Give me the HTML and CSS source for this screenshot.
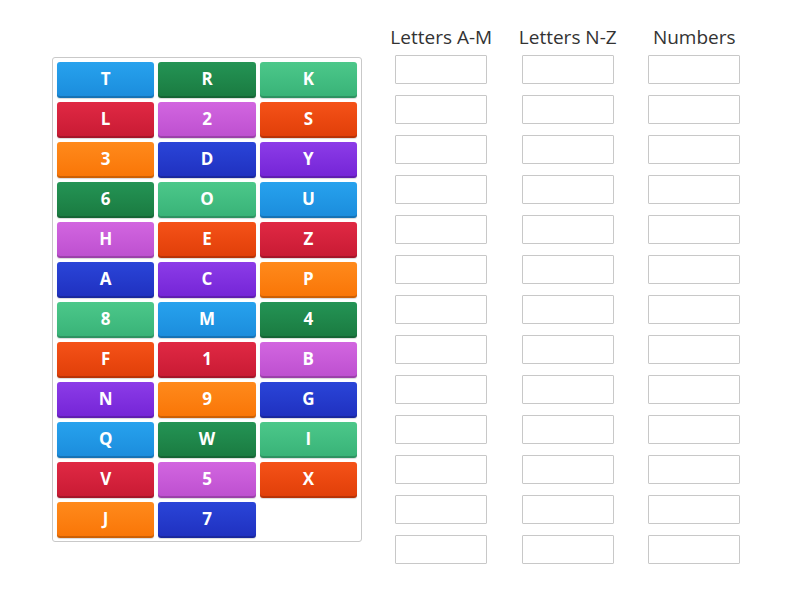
FILE: index.html
```html
<!DOCTYPE html>
<html>
<head>
<meta charset="utf-8">
<link rel="stylesheet" href="styles.css">
</head>
<body>
<div class="page">
  <div class="bank">
    <div class="tile blue">T</div><div class="tile dgreen">R</div><div class="tile lgreen">K</div>
    <div class="tile red">L</div><div class="tile pink">2</div><div class="tile rorange">S</div>
    <div class="tile orange">3</div><div class="tile dblue">D</div><div class="tile purple">Y</div>
    <div class="tile dgreen">6</div><div class="tile lgreen">O</div><div class="tile blue">U</div>
    <div class="tile pink">H</div><div class="tile rorange">E</div><div class="tile red">Z</div>
    <div class="tile dblue">A</div><div class="tile purple">C</div><div class="tile orange">P</div>
    <div class="tile lgreen">8</div><div class="tile blue">M</div><div class="tile dgreen">4</div>
    <div class="tile rorange">F</div><div class="tile red">1</div><div class="tile pink">B</div>
    <div class="tile purple">N</div><div class="tile orange">9</div><div class="tile dblue">G</div>
    <div class="tile blue">Q</div><div class="tile dgreen">W</div><div class="tile lgreen">I</div>
    <div class="tile red">V</div><div class="tile pink">5</div><div class="tile rorange">X</div>
    <div class="tile orange">J</div><div class="tile dblue">7</div>
  </div>
  <div class="groups">
    <div class="group">
      <div class="title">Letters A-M</div>
      <div class="slot"></div><div class="slot"></div><div class="slot"></div><div class="slot"></div><div class="slot"></div><div class="slot"></div><div class="slot"></div><div class="slot"></div><div class="slot"></div><div class="slot"></div><div class="slot"></div><div class="slot"></div><div class="slot"></div>
    </div>
    <div class="group">
      <div class="title">Letters N-Z</div>
      <div class="slot"></div><div class="slot"></div><div class="slot"></div><div class="slot"></div><div class="slot"></div><div class="slot"></div><div class="slot"></div><div class="slot"></div><div class="slot"></div><div class="slot"></div><div class="slot"></div><div class="slot"></div><div class="slot"></div>
    </div>
    <div class="group">
      <div class="title">Numbers</div>
      <div class="slot"></div><div class="slot"></div><div class="slot"></div><div class="slot"></div><div class="slot"></div><div class="slot"></div><div class="slot"></div><div class="slot"></div><div class="slot"></div><div class="slot"></div><div class="slot"></div><div class="slot"></div><div class="slot"></div>
    </div>
  </div>
</div>
</body>
</html>
```
FILE: styles.css
```css
html, body {
  margin: 0;
  background: #fff;
  font-family: "Open Sans", "Liberation Sans", sans-serif;
}
.page {
  display: flex;
  align-items: flex-start;
  padding: 25px 0 0 52px;
}
.bank {
  margin-top: 32px;
  width: 310px;
  box-sizing: border-box;
  border: 1px solid #c9c9c9;
  border-radius: 3px;
  padding: 4px 4px 3px 4px;
  display: grid;
  grid-template-columns: repeat(3, 1fr);
  gap: 4px;
}
.tile {
  height: 36px;
  box-sizing: border-box;
  padding-bottom: 3px;
  border-radius: 3px;
  color: #fff;
  font-weight: 700;
  font-size: 17px;
  display: flex;
  align-items: center;
  justify-content: center;
  box-shadow: inset 0 -2px 0 rgba(0,0,0,0.18), 0 1px 1px rgba(0,0,0,0.15);
}
.blue { background: linear-gradient(#27a2ee, #1b8cdc); }
.dgreen { background: linear-gradient(#249455, #1a7a40); }
.lgreen { background: linear-gradient(#4cc88a, #38b277); }
.red { background: linear-gradient(#e02944, #c81a33); }
.pink { background: linear-gradient(#d266e0, #bd4fcf); }
.rorange { background: linear-gradient(#f55218, #e03e08); }
.orange { background: linear-gradient(#ff8a1c, #f97506); }
.dblue { background: linear-gradient(#2a45d8, #1f30bf); }
.purple { background: linear-gradient(#8c3ce8, #7424d6); }
.groups {
  display: flex;
  margin-left: 16px;
}
.group {
  width: 126.5px;
  display: flex;
  flex-direction: column;
  align-items: center;
  gap: 11px;
}
.title {
  font-size: 19px;
  line-height: 24px;
  color: #333;
  white-space: nowrap;
  margin-bottom: -5px;
}
.slot {
  width: 92px;
  height: 29px;
  box-sizing: border-box;
  border: 1px solid #c8c8c8;
  border-radius: 1px;
  background: #fff;
}
```
